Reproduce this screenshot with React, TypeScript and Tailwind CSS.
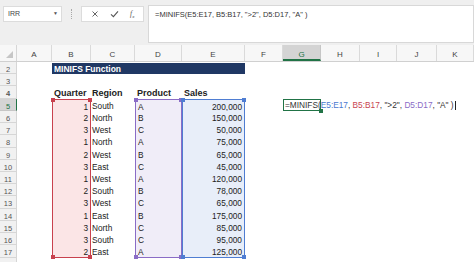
import React from "react";

type Row = [number, string, string, string];

const data: Row[] = [
  [1, "South", "A", "200,000"],
  [2, "North", "B", "150,000"],
  [3, "West", "C", "50,000"],
  [1, "North", "A", "75,000"],
  [2, "West", "B", "65,000"],
  [3, "East", "C", "45,000"],
  [1, "West", "A", "120,000"],
  [2, "South", "B", "78,000"],
  [3, "West", "C", "65,000"],
  [1, "East", "B", "175,000"],
  [3, "North", "C", "85,000"],
  [3, "South", "C", "95,000"],
  [2, "East", "A", "125,000"],
];

const letters = [
  { l: "A", w: "w-[35px]" },
  { l: "B", w: "w-[39px]" },
  { l: "C", w: "w-[44px]" },
  { l: "D", w: "w-[47px]" },
  { l: "E", w: "w-[63px]" },
  { l: "F", w: "w-[38px]" },
  { l: "G", w: "w-[38px]" },
  { l: "H", w: "w-[39px]" },
  { l: "I", w: "w-[37px]" },
  { l: "J", w: "w-[40px]" },
  { l: "K", w: "w-[37px]" },
];

function Handle({ pos }: { pos: string }) {
  return <span className={`absolute w-[4px] h-[4px] ${pos}`} />;
}

function RowNum({ n, active }: { n?: number; active?: boolean }) {
  return (
    <div
      className={`w-[17px] h-full shrink-0 border-b border-r text-center text-[7.5px] leading-[15px] ${
        active
          ? "bg-[#d4d4d4] border-b-[#c6c6c6] border-r-[#217346] text-[#217346]"
          : "bg-[#f1f1f1] border-[#d6d6d6] text-[#555]"
      }`}
    >
      {n}
    </div>
  );
}

function Formula({ colored }: { colored?: boolean }) {
  return (
    <>
      =MINIFS(
      <span className={colored ? "text-[#4a78cf]" : ""}>E5:E17</span>,{" "}
      <span className={colored ? "text-[#c84450]" : ""}>B5:B17</span>, "&gt;2",{" "}
      <span className={colored ? "text-[#8a6cc6]" : ""}>D5:D17</span>, "A" )
    </>
  );
}

export default function App() {
  return (
    <div className="w-[474px] h-[262px] overflow-hidden bg-white font-['Liberation_Sans',Arial,sans-serif] text-[#222]">
      {/* formula bar area */}
      <div className="h-[45px] bg-[#efefef] flex items-start pl-[3px] pt-[6px]">
        <div className="w-[59px] h-[16px] bg-white border border-[#dcdcdc] flex items-center justify-between pl-[4px] pr-[3px]">
          <span className="text-[7px] text-[#444]">IRR</span>
          <span className="text-[5px] text-[#555]">▼</span>
        </div>
        <div className="ml-[9px] mt-[3px] h-[10px] border-l border-dotted border-[#a8a8a8]" />
        <div className="ml-[9px] w-[63px] h-[16px] bg-white border border-[#dcdcdc] flex items-center justify-around px-[3px] text-[#555]">
          <svg width="8" height="8" viewBox="0 0 8 8">
            <path d="M1.5 1.5 L6.5 6.5 M6.5 1.5 L1.5 6.5" stroke="#555" strokeWidth="0.9" fill="none" />
          </svg>
          <svg width="9" height="8" viewBox="0 0 9 8">
            <path d="M1 4.3 L3.4 6.6 L8 1.4" stroke="#555" strokeWidth="1.1" fill="none" />
          </svg>
          <span className="text-[7.5px] italic font-['Liberation_Serif',serif]">
            f<sub className="text-[5px]">x</sub>
          </span>
        </div>
        <div className="ml-[4px] flex-1 h-[38px] -mt-[1px] bg-white border border-[#d8d8d8] pl-[6px] pt-[3px] text-[7.5px] text-[#333] whitespace-nowrap">
          <Formula />
        </div>
      </div>

      {/* column headers */}
      <div className="h-[17px] flex bg-[#f7f7f7] border-b border-[#d0d0d0]">
        <div className="w-[17px] shrink-0 border-r border-[#d6d6d6] relative">
          <svg className="absolute right-[3px] bottom-[3px]" width="7" height="7" viewBox="0 0 7 7">
            <path d="M7 0 L7 7 L0 7 Z" fill="#c6c6c6" />
          </svg>
        </div>
        {letters.map((c) => (
          <div
            key={c.l}
            className={`${c.w} shrink-0 border-r text-center text-[8px] leading-[19px] ${
              c.l === "G"
                ? "bg-[#d4d4d4] border-[#c6c6c6] border-b-2 border-b-[#217346] text-[#217346]"
                : "border-[#dadada] text-[#444]"
            }`}
          >
            {c.l}
          </div>
        ))}
      </div>

      {/* row 2 */}
      <div className="h-[12.23px] flex">
        <RowNum n={2} />
        <div className="w-[35px] shrink-0" />
        <div className="w-[193px] shrink-0 bg-[#203864] text-white font-bold text-[8.5px] leading-[13px] pl-[2px] mt-[1px] h-[11px]">
          MINIFS Function
        </div>
      </div>
      {/* row 3 */}
      <div className="h-[12.23px] flex">
        <RowNum n={3} />
      </div>
      {/* row 4 */}
      <div className="h-[12.23px] flex text-[9px] font-bold leading-[15px]">
        <RowNum n={4} />
        <div className="w-[35px] shrink-0" />
        <div className="w-[39px] shrink-0 pl-[2px] whitespace-nowrap">Quarter</div>
        <div className="w-[44px] shrink-0 pl-[1px]">Region</div>
        <div className="w-[47px] shrink-0 pl-[2px]">Product</div>
        <div className="w-[63px] shrink-0 pl-[2px]">Sales</div>
      </div>

      {data.map((r, i) => {
        const n = i + 5;
        const first = i === 0;
        const last = i === data.length - 1;
        return (
          <div key={n} className="h-[12.23px] flex text-[8.3px] leading-[15px]">
            <RowNum n={n} active={first} />
            <div className="w-[35px] shrink-0" />
            <div
              className={`w-[39px] shrink-0 relative text-right pr-[2px] bg-[#fbe5e6] border-x border-[#c8414e] ${
                first ? "border-t" : ""
              } ${last ? "border-b" : ""}`}
            >
              {r[0]}
              {first && (
                <>
                  <Handle pos="-left-[2px] -top-[2px] bg-[#c8414e]" />
                  <Handle pos="-right-[2px] -top-[2px] bg-[#c8414e]" />
                </>
              )}
              {last && (
                <>
                  <Handle pos="-left-[2px] -bottom-[2px] bg-[#c8414e]" />
                  <Handle pos="-right-[2px] -bottom-[2px] bg-[#c8414e]" />
                </>
              )}
            </div>
            <div className="w-[44px] shrink-0 pl-[1px]">{r[1]}</div>
            <div
              className={`w-[47px] shrink-0 relative pl-[2px] bg-[#f0edf8] border-x border-[#8a6cc6] ${
                first ? "border-t" : ""
              } ${last ? "border-b" : ""}`}
            >
              {r[2]}
              {first && (
                <>
                  <Handle pos="-left-[2px] -top-[2px] bg-[#8a6cc6]" />
                  <Handle pos="-right-[2px] -top-[2px] bg-[#8a6cc6]" />
                </>
              )}
              {last && (
                <>
                  <Handle pos="-left-[2px] -bottom-[2px] bg-[#8a6cc6]" />
                  <Handle pos="-right-[2px] -bottom-[2px] bg-[#8a6cc6]" />
                </>
              )}
            </div>
            <div
              className={`w-[63px] shrink-0 relative text-right pr-[2px] bg-[#e8eef9] border-x border-[#4f7dd2] ${
                first ? "border-t" : ""
              } ${last ? "border-b" : ""}`}
            >
              {r[3]}
              {first && (
                <>
                  <Handle pos="-left-[2px] -top-[2px] bg-[#4f7dd2]" />
                  <Handle pos="-right-[2px] -top-[2px] bg-[#4f7dd2]" />
                </>
              )}
              {last && (
                <>
                  <Handle pos="-left-[2px] -bottom-[2px] bg-[#4f7dd2]" />
                  <Handle pos="-right-[2px] -bottom-[2px] bg-[#4f7dd2]" />
                </>
              )}
            </div>
            <div className="w-[38px] shrink-0" />
            {first && (
              <div className="w-[38px] shrink-0 relative border-[1.5px] border-[#217346] whitespace-nowrap text-[8.3px] leading-[11px] pl-[1px] text-[#333]">
                <Formula colored />
                <span className="inline-block w-px h-[9px] bg-[#222] align-middle ml-[1px]" />
                <Handle pos="-right-[3px] -bottom-[3px] bg-[#217346]" />
              </div>
            )}
          </div>
        );
      })}
      <div className="h-[12.23px] flex">
        <RowNum />
      </div>
    </div>
  );
}
